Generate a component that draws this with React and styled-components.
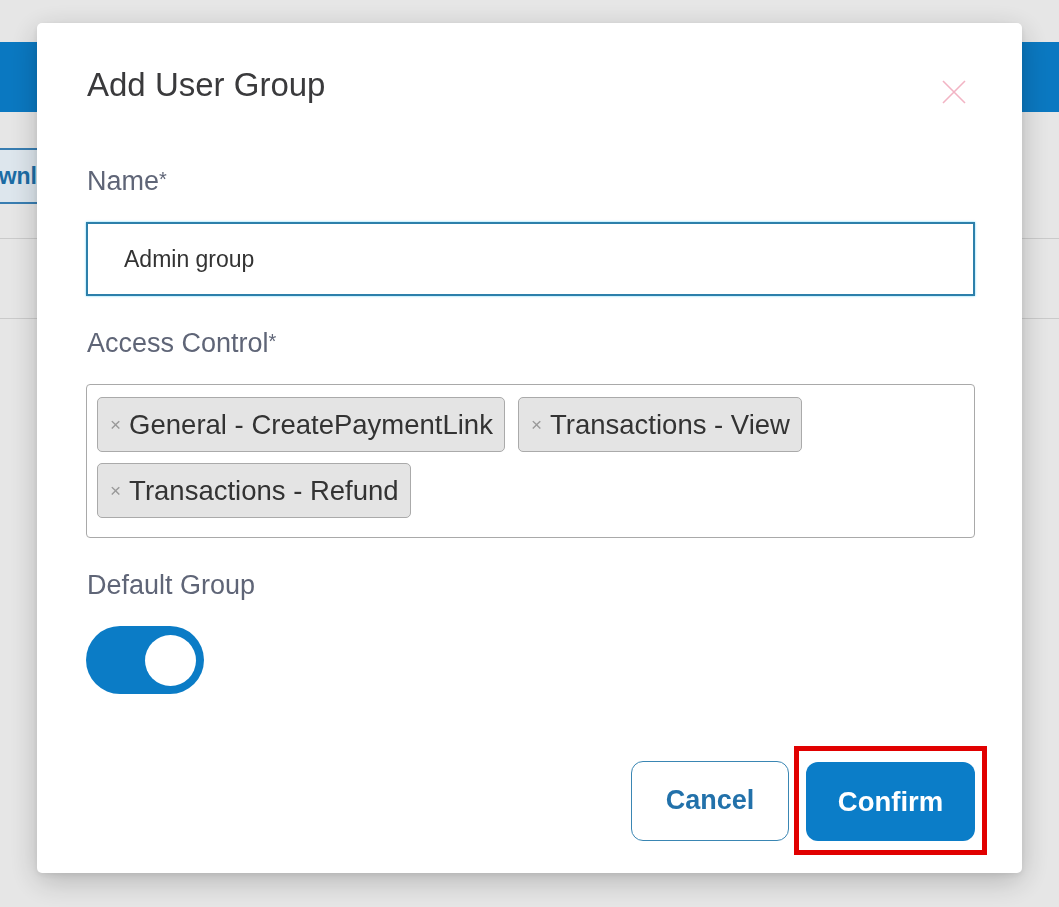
import React, { useState } from 'react';
import styled, { createGlobalStyle } from 'styled-components';

const GlobalStyle = createGlobalStyle`
    html, body {
        margin: 0;
        padding: 0;
        overflow: hidden;
    }
    body {
        font-family: "Liberation Sans", Arial, Helvetica, sans-serif;
        background: #ebebeb;
    }
    * {
        box-sizing: border-box;
    }
`;

const Page = styled.div`
    min-height: 100vh;
    padding-top: 42px;
    background: #ebebeb;
`;

const TopBar = styled.div`
    height: 70px;
    background: #0b7bc5;
`;

const Toolbar = styled.div`
    display: flex;
    align-items: center;
    padding-top: 36px;
`;

const DownloadButton = styled.button`
    height: 56px;
    margin-left: -50px;
    padding: 0 16px;
    border: 2px solid #3a80b5;
    border-radius: 6px;
    background: #e2ebf2;
    color: #1d6fa8;
    font-family: "Liberation Sans", Arial, sans-serif;
    font-weight: 700;
    font-size: 23px;
`;

const Table = styled.div`
    margin-top: 34px;
    border-top: 1px solid #cfcfcf;
`;

const TableRow = styled.div`
    height: 80px;
    border-bottom: 1px solid #cfcfcf;
`;

const Overlay = styled.div`
    position: fixed;
    inset: 0;
    padding: 23px 0 0 37px;
    background: rgba(0, 0, 0, 0.02);
`;

const Modal = styled.div`
    width: 985px;
    height: 850px;
    display: flex;
    flex-direction: column;
    padding: 42px 47px 18px 49px;
    background: #ffffff;
    border-radius: 5px;
    box-shadow: 0 8px 30px rgba(0, 0, 0, 0.22), 0 2px 6px rgba(0, 0, 0, 0.08);
`;

const ModalHeader = styled.div`
    display: flex;
    justify-content: space-between;
    align-items: flex-start;
`;

const ModalTitle = styled.h2`
    margin: 0;
    padding-left: 1px;
    font-weight: 400;
    font-size: 33px;
    line-height: 40px;
    color: #3a3a3c;
`;

const CloseButton = styled.button`
    width: 24px;
    height: 24px;
    margin: 15px 9px 0 0;
    padding: 0;
    border: none;
    background: transparent;
    display: flex;
`;

const Form = styled.div`
    display: flex;
    flex-direction: column;
    gap: 32px;
    margin-top: 61px;
`;

const Field = styled.div`
    display: flex;
    flex-direction: column;
`;

const Label = styled.label`
    display: block;
    height: 30px;
    font-size: 27px;
    line-height: 30px;
    color: #5f6577;
    margin-bottom: 26px;
    padding-left: 1px;
`;

const Required = styled.span`
    font-size: 20px;
    line-height: 0;
    vertical-align: 4px;
`;

const TextInput = styled.input`
    width: 100%;
    height: 74px;
    padding: 0 36px;
    border: 2px solid #2d80ab;
    border-radius: 0;
    box-shadow: 0 0 2px rgba(0, 190, 255, 0.6);
    outline: none;
    font-family: "Liberation Sans", Arial, sans-serif;
    font-size: 23px;
    color: #333333;
`;

const MultiBox = styled.div`
    min-height: 154px;
    display: flex;
    flex-wrap: wrap;
    align-content: flex-start;
    gap: 11px 13px;
    padding: 12px 10px 19px;
    border: 1px solid #a9a9a9;
    border-radius: 4px;
`;

const Chip = styled.span`
    display: inline-flex;
    align-items: center;
    height: 55px;
    padding: 0 11px 0 12px;
    background: #e4e4e4;
    border: 1px solid #aaaaaa;
    border-radius: 5px;
    font-size: 27.5px;
    color: #333333;
`;

const ChipRemove = styled.span`
    font-size: 19px;
    color: #999999;
    margin-right: 8px;
`;

const Toggle = styled.button`
    width: 118px;
    height: 68px;
    display: flex;
    align-items: center;
    justify-content: ${({ $on }) => ($on ? 'flex-end' : 'flex-start')};
    padding: 0 8px;
    border: none;
    border-radius: 34px;
    background: ${({ $on }) => ($on ? '#0b7cc6' : '#c4c4c4')};
`;

const Knob = styled.span`
    width: 51px;
    height: 51px;
    border-radius: 50%;
    background: #ffffff;
`;

const Footer = styled.div`
    margin-top: auto;
    margin-right: -12px;
    display: flex;
    justify-content: flex-end;
    align-items: center;
    gap: 5px;
`;

const CancelButton = styled.button`
    width: 158px;
    height: 80px;
    border: 1.5px solid #3a86b3;
    border-radius: 12px;
    background: #ffffff;
    color: #2271aa;
    font-family: "Liberation Sans", Arial, sans-serif;
    font-weight: 700;
    font-size: 27px;
`;

const HighlightFrame = styled.div`
    display: flex;
    padding: 11px 7px 9px;
    border: 5px solid #e10000;
`;

const ConfirmButton = styled.button`
    width: 169px;
    height: 79px;
    border: none;
    border-radius: 12px;
    background: #0b7dc8;
    color: #ffffff;
    font-family: "Liberation Sans", Arial, sans-serif;
    font-weight: 700;
    font-size: 27.5px;
`;

const CloseIcon = () => (
    <svg width="24" height="24" viewBox="0 0 24 24">
        <path d="M1 1 L23 23 M23 1 L1 23" stroke="#f2b4c4" strokeWidth="1.6" fill="none" />
    </svg>
);

const permissions = [
    'General - CreatePaymentLink',
    'Transactions - View',
    'Transactions - Refund'
];

const App = () => {
    const [name, setName] = useState('Admin group');
    const [isDefault, setIsDefault] = useState(true);

    return (
        <>
            <GlobalStyle />
            <Page>
                <TopBar />
                <Toolbar>
                    <DownloadButton>Download</DownloadButton>
                </Toolbar>
                <Table>
                    <TableRow />
                </Table>
            </Page>
            <Overlay>
                <Modal>
                    <ModalHeader>
                        <ModalTitle>Add User Group</ModalTitle>
                        <CloseButton aria-label='Close'>
                            <CloseIcon />
                        </CloseButton>
                    </ModalHeader>
                    <Form>
                        <Field>
                            <Label>Name<Required>*</Required></Label>
                            <TextInput value={name} onChange={e => setName(e.target.value)} />
                        </Field>
                        <Field>
                            <Label>Access Control<Required>*</Required></Label>
                            <MultiBox>
                                {permissions.map(p => (
                                    <Chip key={p}>
                                        <ChipRemove>×</ChipRemove>
                                        {p}
                                    </Chip>
                                ))}
                            </MultiBox>
                        </Field>
                        <Field>
                            <Label>Default Group</Label>
                            <Toggle $on={isDefault} onClick={() => setIsDefault(!isDefault)}>
                                <Knob />
                            </Toggle>
                        </Field>
                    </Form>
                    <Footer>
                        <CancelButton>Cancel</CancelButton>
                        <HighlightFrame>
                            <ConfirmButton>Confirm</ConfirmButton>
                        </HighlightFrame>
                    </Footer>
                </Modal>
            </Overlay>
        </>
    );
};

export default App;
